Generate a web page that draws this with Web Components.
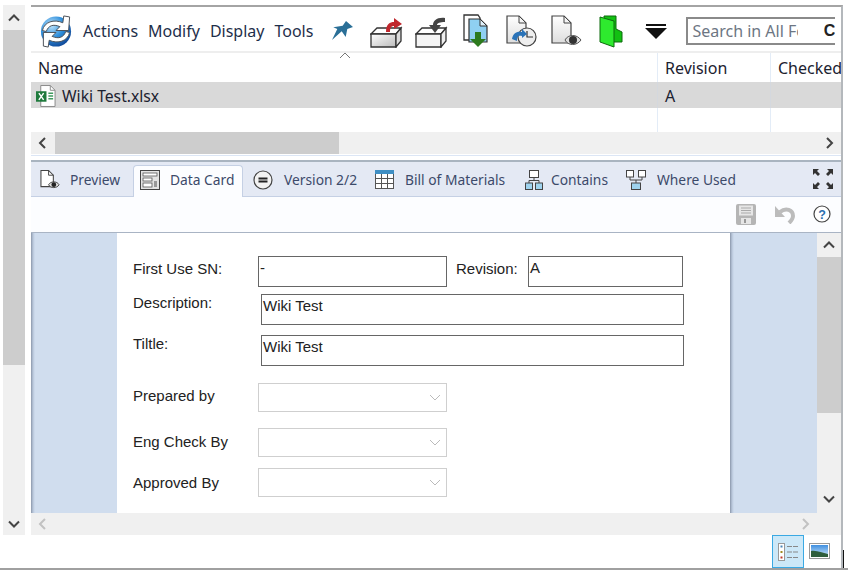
<!DOCTYPE html>
<html>
<head>
<meta charset="utf-8">
<title>Data Card</title>
<style>
  html, body { margin: 0; padding: 0; background: #fff; overflow: hidden; }
</style>
</head>
<body>
<x-app>
  <x-scroll slot="side" dir="v" start="25" size="335" end="22" style="width:22px;height:530px"></x-scroll>

  <x-toolbar slot="main"></x-toolbar>
  <x-file-list slot="main"></x-file-list>
  <x-scroll slot="main" dir="h" start="24" size="284" end="24" style="height:22px"></x-scroll>
  <x-tabs slot="main">
    <x-tab icon="tabeye" style="--w:100px;--pl:7px;--gap:10px">Preview</x-tab>
    <x-tab icon="tabcard" active style="--w:110px;--pl:7px;--gap:10px">Data Card</x-tab>
    <x-tab icon="tabversion" style="--w:121px;--pl:10px;--gap:11px">Version 2/2</x-tab>
    <x-tab icon="tabtable" style="--w:150px;--pl:10px;--gap:11px">Bill of Materials</x-tab>
    <x-tab icon="tabcontains" style="--w:102px;--pl:10px;--gap:7px">Contains</x-tab>
    <x-tab icon="tabused" style="--w:129px;--pl:10px;--gap:11px">Where Used</x-tab>
  </x-tabs>
  <x-actions slot="main"></x-actions>
  <x-card slot="main">
    <x-row style="--top:23px">
      <x-field label="First Use SN:" style="--lw:125px;--ly:-3px"><x-input style="width:189px">-</x-input></x-field>
      <x-field label="Revision:" style="--lw:72px;--ly:-3px;margin-left:9px"><x-input style="width:155px">A</x-input></x-field>
    </x-row>
    <x-row style="--top:7px">
      <x-field label="Description:" style="--lw:128px;--ly:-7px"><x-input style="width:423px" pad>Wiki Test</x-input></x-field>
    </x-row>
    <x-row style="--top:10px">
      <x-field label="Tiltle:" style="--lw:128px;--ly:-7px"><x-input style="width:423px" pad>Wiki Test</x-input></x-field>
    </x-row>
    <x-row style="--top:17px">
      <x-field label="Prepared by" style="--lw:125px;--ly:-2px"><x-combo></x-combo></x-field>
    </x-row>
    <x-row style="--top:16px">
      <x-field label="Eng Check By" style="--lw:125px;--ly:-1px"><x-combo></x-combo></x-field>
    </x-row>
    <x-row style="--top:11px">
      <x-field label="Approved By" style="--lw:125px;--ly:0px"><x-combo></x-combo></x-field>
    </x-row>
  </x-card>
  <x-scroll slot="main" dir="h" start="24" size="0" end="24" off style="height:22px;padding-right:24px"></x-scroll>
  <x-status slot="main"></x-status>
</x-app>

<script>
const ICONS = {
  logo: `<svg width="34" height="35" viewBox="0 0 34 36"><defs><radialGradient id="b" cx=".35" cy=".3" r=".8"><stop offset="0" stop-color="#bfe4fb"/><stop offset=".5" stop-color="#2f8fdc"/><stop offset="1" stop-color="#0c3f8f"/></radialGradient></defs>
    <circle cx="17" cy="18" r="15.5" fill="url(#b)"/>
    <path d="M3 17C5 8 15 5 24 9L25 2 L31 3 L30 17 L17 17 L21 13C14 10 9 12 7 18Z" fill="#fff" stroke="#4a4f57" stroke-width="1"/>
    <path d="M31 19C29 28 19 31 10 27L9 34 L4 33 L4 19 L17 19 L13 23C20 26 25 24 27 18Z" fill="#fff" stroke="#4a4f57" stroke-width="1"/></svg>`,
  pin: `<svg width="23" height="22" viewBox="0 0 23 22"><path d="M15 1L22 7L16.300 9L14.700 17L10.700 11.300L1 20L6.300 9L2.300 7.300L11.700 5.700Z" fill="#2a6f97"/></svg>`,
  boxout: `<svg width="33" height="33" viewBox="0 0 33 33"><defs><linearGradient id="g" x1="0" x2="1" y1="0" y2="1"><stop offset="0" stop-color="#fff"/><stop offset="1" stop-color="#bbb"/></linearGradient></defs>
    <path d="M1 19L7 13H31L26 19Z" fill="#fff" stroke="#333" stroke-width="1.300"/><path d="M1 19H26V32H1Z" fill="url(#g)" stroke="#333" stroke-width="1.300"/><path d="M26 19L31 13V26L26 32Z" fill="#ddd" stroke="#333" stroke-width="1.300"/>
    <path d="M16 17C16 9 20 7 24 7V3L32 9L24 14V11C21 11 20 13 20 17Z" fill="#c0272d"/></svg>`,
  boxin: `<svg width="33" height="33" viewBox="0 0 33 33"><path d="M1 19L7 13H31L26 19Z" fill="#fff" stroke="#333" stroke-width="1.300"/><path d="M1 19H26V32H1Z" fill="#f4f4f4" stroke="#333" stroke-width="1.300"/><path d="M26 19L31 13V26L26 32Z" fill="#eee" stroke="#333" stroke-width="1.300"/>
    <path d="M30 3C22 2 18 6 18 10H14L20 18L26 10H22C22 8 25 7 30 7Z" fill="#444"/></svg>`,
  docdown: `<svg width="27" height="34" viewBox="0 0 27 34"><path d="M1 1H15L17 4V26H1Z" fill="#fff" stroke="#333" stroke-width="1.300"/><path d="M6 5H17L24 12V28H6Z" fill="#8fd0f2" stroke="#333" stroke-width="1.200"/><path d="M17 5V12H24Z" fill="#dff1fb" stroke="#333"/>
    <path d="M12 18H18V25H23L15 33L7 25H12Z" fill="#2c7a1e"/></svg>`,
  dochist: `<svg width="31" height="32" viewBox="0 0 31 32"><defs><linearGradient id="d" x1="0" x2="0" y1="0" y2="1"><stop offset="0" stop-color="#fff"/><stop offset="1" stop-color="#ddd"/></linearGradient></defs>
    <path d="M1 1H13L20 8V28H1Z" fill="url(#d)" stroke="#444" stroke-width="1.200"/><path d="M13 1V8H20Z" fill="#f4f4f4" stroke="#444"/>
    <circle cx="21" cy="22" r="9" fill="#eee" stroke="#444" stroke-width="1.200"/><path d="M21 16V22H27" fill="none" stroke="#333" stroke-width="1.200"/>
    <path d="M6 24C7 18 11 16 16 17V14L21 19L16 23V21C13 20 11 21 11 26Z" fill="#2a73b8"/></svg>`,
  doceye: `<svg width="31" height="32" viewBox="0 0 31 32"><path d="M1 1H13L20 8V28H1Z" fill="url(#d2)" stroke="#444" stroke-width="1.200"/><defs><linearGradient id="d2" x1="0" x2="0" y1="0" y2="1"><stop offset="0" stop-color="#fff"/><stop offset="1" stop-color="#ddd"/></linearGradient></defs><path d="M13 1V8H20Z" fill="#f4f4f4" stroke="#444"/>
    <path d="M14 25C17 19 26 19 30 25C26 31 17 31 14 25Z" fill="#ddd" stroke="#555"/><circle cx="22" cy="25" r="4" fill="#333"/></svg>`,
  folder: `<svg width="24" height="33" viewBox="0 0 24 33"><path d="M5 1H17V14L23 17V27H5Z" fill="#12c012" stroke="#0d6b0d"/><path d="M1 2L15 6V32L1 27Z" fill="#2eea2e" stroke="#0d6b0d"/></svg>`,
  drop: `<svg width="22" height="15" viewBox="0 0 22 15"><rect x="1" y="0" width="20" height="2" fill="#111"/><path d="M0 4H22L11 15Z" fill="#111"/></svg>`,
  excel: `<svg width="20" height="24" viewBox="0 0 21 24"><path d="M5 1H15L20 6V23H5Z" fill="#fff" stroke="#888"/><path d="M15 1V6H20" fill="none" stroke="#888"/><rect x="0" y="7" width="11" height="11" fill="#1e7a3c"/><path d="M3 9L8 16M8 9L3 16" stroke="#fff" stroke-width="1.500"/><path d="M13 9H18M13 12H18M13 15H18" stroke="#3f9a5f" stroke-width="1.600"/></svg>`,
  tabeye: `<svg width="21" height="21" viewBox="0 0 21 21"><path d="M1 1H9L14 6V18H1Z" fill="#fff" stroke="#444" stroke-width="1.100"/><path d="M9 1V6H14" fill="none" stroke="#444"/><path d="M9 16C11 12 18 12 20 16C18 20 11 20 9 16Z" fill="#ddd" stroke="#444"/><circle cx="14.500" cy="16" r="2.500" fill="#222"/></svg>`,
  tabcard: `<svg width="20" height="20" viewBox="0 0 20 20"><rect x=".5" y=".5" width="19" height="19" fill="#e4e4e4" stroke="#444"/><rect x="3" y="3" width="14" height="3" fill="#fff" stroke="#555" stroke-width=".8"/><rect x="3" y="8" width="9" height="3" fill="#fff" stroke="#555" stroke-width=".8"/><rect x="3" y="13" width="9" height="4" fill="#fff" stroke="#555" stroke-width=".8"/><rect x="14" y="11" width="3" height="6" fill="#999"/></svg>`,
  tabversion: `<svg width="20" height="20" viewBox="0 0 20 20"><circle cx="10" cy="10" r="9" fill="#f2f2f2" stroke="#444" stroke-width="1.200"/><path d="M5.500 8.500H14.500M5.500 11.500H14.500" stroke="#222" stroke-width="1.800"/></svg>`,
  tabtable: `<svg width="19" height="19" viewBox="0 0 19 19"><rect x=".5" y=".5" width="18" height="18" fill="#fff" stroke="#555"/><rect x="0" y="0" width="19" height="4" fill="#3f8fc4"/><path d="M0 8.500H19M0 13.500H19M6.500 4V19M12.500 4V19" stroke="#555"/></svg>`,
  tabcontains: `<svg width="18" height="20" viewBox="0 0 18 20"><rect x="4.500" y=".5" width="9" height="7" fill="#fff" stroke="#444"/><path d="M9 7.500V10.500M4 13V10.500H14V13" fill="none" stroke="#444"/><rect x=".5" y="13" width="7" height="6.500" fill="#9fd3ee" stroke="#444"/><rect x="10.500" y="13" width="7" height="6.500" fill="#9fd3ee" stroke="#444"/></svg>`,
  tabused: `<svg width="20" height="20" viewBox="0 0 20 20"><rect x=".5" y=".5" width="7" height="6.500" fill="#fff" stroke="#444"/><rect x="12.500" y=".5" width="7" height="6.500" fill="#fff" stroke="#444"/><path d="M4 7V10H16V7M10 10V13" fill="none" stroke="#444"/><rect x="5.500" y="13" width="9" height="6.500" fill="#9fd3ee" stroke="#444"/></svg>`,
  expand: `<svg width="22" height="22" viewBox="0 0 22 22"><g fill="#333"><path d="M1 1H7L5 3L8 6L6 8L3 5L1 7Z"/><path d="M21 1H15L17 3L14 6L16 8L19 5L21 7Z"/><path d="M1 21H7L5 19L8 16L6 14L3 17L1 15Z"/><path d="M21 21H15L17 19L14 16L16 14L19 17L21 15Z"/></g></svg>`,
  save: `<svg width="20" height="21" viewBox="0 0 20 21"><rect x="0" y="0" width="20" height="21" rx="2" fill="#b5b5b5"/><rect x="3" y="1.500" width="14" height="10" fill="#e6e6e6"/><path d="M5 4H15M5 6.500H15M5 9H15" stroke="#aaa"/><rect x="5" y="14" width="10" height="6" fill="#e6e6e6"/><rect x="8" y="15" width="2" height="4" fill="#999"/></svg>`,
  undo: `<svg width="21" height="20" viewBox="0 0 21 20"><path d="M0 2V13H10Z" fill="#bcbcbc"/><path d="M5 8C11 3 18 6 18 12C18 15 16 17 14 19" fill="none" stroke="#bcbcbc" stroke-width="4"/></svg>`,
  help: `<svg width="18" height="18" viewBox="0 0 18 18"><circle cx="9" cy="9" r="8" fill="#fff" stroke="#444" stroke-width="1.200"/><text x="9" y="13.500" text-anchor="middle" font-family="Liberation Sans" font-size="12.500" font-weight="700" fill="#2b6fb0">?</text></svg>`,
  listview: `<svg width="21" height="18" viewBox="0 0 21 18"><rect x=".5" y=".5" width="6" height="17" fill="#fff" stroke="#999"/><rect x="2.500" y="2.500" width="2" height="2" fill="#4a86b8"/><rect x="2.500" y="8" width="2" height="2" fill="#a08a20"/><rect x="2.500" y="13.500" width="2" height="2" fill="#c0392b"/><path d="M9 3.500H20M9 9H20M9 14.500H20" stroke="#888" stroke-width="1.200" stroke-dasharray="5 1"/></svg>`,
  image: `<svg width="21" height="16" viewBox="0 0 21 16"><defs><linearGradient id="s" x1="0" x2="0" y1="0" y2="1"><stop offset="0" stop-color="#3f8fe0"/><stop offset="1" stop-color="#d8ecfa"/></linearGradient></defs><rect x=".5" y=".5" width="20" height="15" fill="#fff" stroke="#999"/><rect x="2" y="2" width="17" height="12" fill="url(#s)"/><path d="M2 8C8 7 13 10 19 11V14H2Z" fill="#2f5e3c"/></svg>`
};

function shadow(el, html) {
  if (el.shadowRoot) return;
  el.attachShadow({ mode: "open" }).innerHTML = html;
}

class XIcon extends HTMLElement {
  connectedCallback() {
    shadow(this, `<style>:host{display:inline-flex;flex:none} svg{display:block}</style>${ICONS[this.getAttribute("name")] || ""}`);
  }
}

class XApp extends HTMLElement {
  connectedCallback() {
    shadow(this, `<style>
      :host{display:flex;position:relative;box-sizing:border-box;width:848px;height:570px;padding:5px 0 0 3px;border-bottom:2px solid #a0a0a0;font-family:"Noto Sans","Open Sans",sans-serif}
      .side{width:22px;margin-right:6px}
      .main{width:810px;height:561px;display:flex;flex-direction:column;border-top:2px solid #a4a4a4;border-right:2px solid #b4b8bc;background:#fff}
      .nick{position:absolute;left:843px;bottom:0;width:1px;height:18px;background:#111}
    </style>
    <div class="side"><slot name="side"></slot></div>
    <div class="main"><slot name="main"></slot></div>
    <div class="nick"></div>`);
  }
}

class XScroll extends HTMLElement {
  connectedCallback() {
    const v = this.getAttribute("dir") === "v";
    const off = this.hasAttribute("off");
    const a = +this.getAttribute("start"), s = +this.getAttribute("size"), e = +this.getAttribute("end");
    const col = off ? "#c2c2c2" : "#444";
    const chev = (pts) => `<svg width="12" height="12" viewBox="0 0 12 12"><polyline points="${pts}" fill="none" stroke="${col}" stroke-width="2"/></svg>`;
    const first = v ? "1,8.500 6,3.500 11,8.500" : "8,1 3,6 8,11";
    const last = v ? "1,3.500 6,8.500 11,3.500" : "4,1 9,6 4,11";
    shadow(this, `<style>
      :host{display:flex;flex:none;box-sizing:border-box;background:#f0f0f0;flex-direction:${v ? "column" : "row"}}
      .btn{flex:none;display:flex;align-items:center;justify-content:center;${v ? "height" : "width"}:var(--len)}
      .thumb{flex:none;background:#cdcdcd;${v ? "height" : "width"}:${s}px}
      .rest{flex:1}
    </style>
    <div class="btn" style="--len:${a}px">${chev(first)}</div>
    <div class="thumb"></div><div class="rest"></div>
    <div class="btn" style="--len:${e}px">${chev(last)}</div>`);
  }
}

class XToolbar extends HTMLElement {
  connectedCallback() {
    const ic = (n, ml) => `<x-icon name="${n}" style="margin-left:${ml}px"></x-icon>`;
    shadow(this, `<style>
      :host{display:flex;flex:none;align-items:center;box-sizing:border-box;height:46px;border-bottom:2px solid #eeeeee;padding-top:4px;color:#1f2f4a}
      .m{font-size:16px;line-height:20px;white-space:nowrap}
      .search{margin-left:19px;width:149px;height:28px;box-sizing:border-box;border:2px solid #8a8a8a;border-right:0;display:flex;align-items:center;overflow:hidden;background:#fff;font-size:16px;color:#6d7683;padding-left:4px}
      .search .t{width:110px;overflow:hidden;white-space:nowrap}
      .search b{margin-left:26px;color:#222;font-family:"Liberation Sans",sans-serif;font-size:16px}
    </style>
    ${ic("logo", 8)}
    <span class="m" style="margin-left:10px">Actions</span>
    <span class="m" style="margin-left:10px">Modify</span>
    <span class="m" style="margin-left:10px">Display</span>
    <span class="m" style="margin-left:10px">Tools</span>
    ${ic("pin", 18)}${ic("boxout", 16)}${ic("boxin", 12)}${ic("docdown", 15)}${ic("dochist", 16)}${ic("doceye", 14)}${ic("folder", 17)}${ic("drop", 22)}
    <div class="search"><span class="t">Search in All Fo</span><b>C</b></div>`);
  }
}

class XFileList extends HTMLElement {
  connectedCallback() {
    shadow(this, `<style>
      :host{display:grid;flex:none;position:relative;grid-template-columns:627px 113px 1fr;grid-template-rows:29px 26px 24px;font-size:16px;color:#1c2230}
      .c{display:flex;align-items:center;padding-left:7px;box-sizing:border-box;white-space:nowrap;overflow:hidden}
      .b{border-right:1px solid #e3ecf7}
      .sel{background:#d9d9d9;padding-top:1px}
      .sel.b{border-right-color:#d4d8de}
      .name{padding-left:5px;gap:6px;font-size:15.700px}
      .caret{position:absolute;left:308px;top:-1px}
    </style>
    <div class="c b">Name</div><div class="c b">Revision</div><div class="c">Checked Out By</div>
    <div class="c sel b name"><x-icon name="excel"></x-icon>Wiki Test.xlsx</div><div class="c sel b">A</div><div class="c sel"></div>
    <div class="c b"></div><div class="c b"></div><div class="c"></div>
    <svg class="caret" width="12" height="7" viewBox="0 0 12 7"><polyline points="1,6 6,1 11,6" fill="none" stroke="#777" stroke-width="1"/></svg>`);
  }
}

class XTabs extends HTMLElement {
  connectedCallback() {
    shadow(this, `<style>
      :host{display:flex;flex:none;align-items:flex-end;box-sizing:border-box;height:42px;margin-top:1px;border-top:1px solid #dce6f5;padding-left:2px;position:relative}
      .bar{position:absolute;left:0;right:0;top:4px;bottom:0;background:#e4e9f4;border-top:2px solid #a9b4c0;border-bottom:1px solid #c5d0e4;box-sizing:border-box}
      .tabs{display:flex;position:relative;height:32px;margin-bottom:0}
      x-icon{position:absolute;left:781px;top:12px}
    </style>
    <div class="bar"></div><div class="tabs"><slot></slot></div>
    <x-icon name="expand"></x-icon>`);
  }
}

class XTab extends HTMLElement {
  connectedCallback() {
    shadow(this, `<style>
      :host{display:flex;align-items:center;box-sizing:border-box;width:var(--w);padding-left:var(--pl);padding-bottom:3px;gap:var(--gap);font-size:13.800px;color:#3c4a6a;white-space:nowrap;height:32px}
      :host([active]){background:#fcfdff;border:1px solid #c5d0e4;border-bottom:0;border-radius:4px 4px 0 0;padding-left:calc(var(--pl) - 1px);padding-bottom:4px}
      x-icon{width:20px;justify-content:center}
    </style>
    <x-icon name="${this.getAttribute("icon")}"></x-icon><slot></slot>`);
  }
}

class XActions extends HTMLElement {
  connectedCallback() {
    shadow(this, `<style>
      :host{display:flex;flex:none;align-items:center;justify-content:flex-end;box-sizing:border-box;height:35px;padding:0 10px 1px 0;background:#fcfdff}
    </style>
    <x-icon name="save"></x-icon><x-icon name="undo" style="margin-left:19px"></x-icon><x-icon name="help" style="margin-left:17px"></x-icon>`);
  }
}

class XCard extends HTMLElement {
  connectedCallback() {
    shadow(this, `<style>
      :host{display:grid;flex:none;height:281px;grid-template-columns:86px 613px 87px 24px;border-top:1px solid #a9b4c4;box-sizing:border-box}
      .gut{background:linear-gradient(90deg,#8b97aa 0,#b8c6da 2px,#d0ddee 4px)}
      .form{background:#fff;padding-left:16px;overflow:hidden;font-family:"Liberation Sans",sans-serif;font-size:15px;color:#222}
      x-scroll{height:280px}
    </style>
    <div class="gut"></div>
    <div class="form"><slot></slot></div>
    <div class="gut"></div>
    <x-scroll dir="v" start="24" size="156" end="28"></x-scroll>`);
  }
}

class XRow extends HTMLElement {
  connectedCallback() {
    shadow(this, `<style>:host{display:flex;margin-top:var(--top)}</style><slot></slot>`);
  }
}

class XField extends HTMLElement {
  connectedCallback() {
    shadow(this, `<style>
      :host{display:flex;align-items:center}
      .l{width:var(--lw);flex:none;position:relative;top:var(--ly);white-space:nowrap}
    </style>
    <span class="l">${this.getAttribute("label")}</span><slot></slot>`);
  }
}

class XInput extends HTMLElement {
  connectedCallback() {
    shadow(this, `<style>
      :host{display:block;box-sizing:border-box;height:31px;border:1px solid #666;background:#fff;padding:1px 1px;line-height:20px;white-space:nowrap}
    </style><slot></slot>`);
  }
}

class XCombo extends HTMLElement {
  connectedCallback() {
    shadow(this, `<style>
      :host{display:flex;align-items:center;justify-content:flex-end;box-sizing:border-box;width:189px;height:29px;border:1.500px solid #cfcfcf;background:#fff;padding-right:5px}
    </style>
    <svg width="12" height="7" viewBox="0 0 12 7"><polyline points="1,1 6,6 11,1" fill="none" stroke="#bbb" stroke-width="1"/></svg>`);
  }
}

class XStatus extends HTMLElement {
  connectedCallback() {
    shadow(this, `<style>
      :host{display:flex;flex:1;align-items:flex-start;justify-content:flex-end;padding-right:11px;background:#fff}
      .on{width:32px;height:33px;box-sizing:border-box;background:#cce8f8;border:1.500px solid #3aa9e3;display:flex;align-items:center;justify-content:center}
      .im{margin:8px 0 0 5px}
    </style>
    <div class="on"><x-icon name="listview"></x-icon></div>
    <x-icon class="im" name="image"></x-icon>`);
  }
}

customElements.define("x-icon", XIcon);
customElements.define("x-app", XApp);
customElements.define("x-scroll", XScroll);
customElements.define("x-toolbar", XToolbar);
customElements.define("x-file-list", XFileList);
customElements.define("x-tabs", XTabs);
customElements.define("x-tab", XTab);
customElements.define("x-actions", XActions);
customElements.define("x-card", XCard);
customElements.define("x-row", XRow);
customElements.define("x-field", XField);
customElements.define("x-input", XInput);
customElements.define("x-combo", XCombo);
customElements.define("x-status", XStatus);
</script>
</body>
</html>
